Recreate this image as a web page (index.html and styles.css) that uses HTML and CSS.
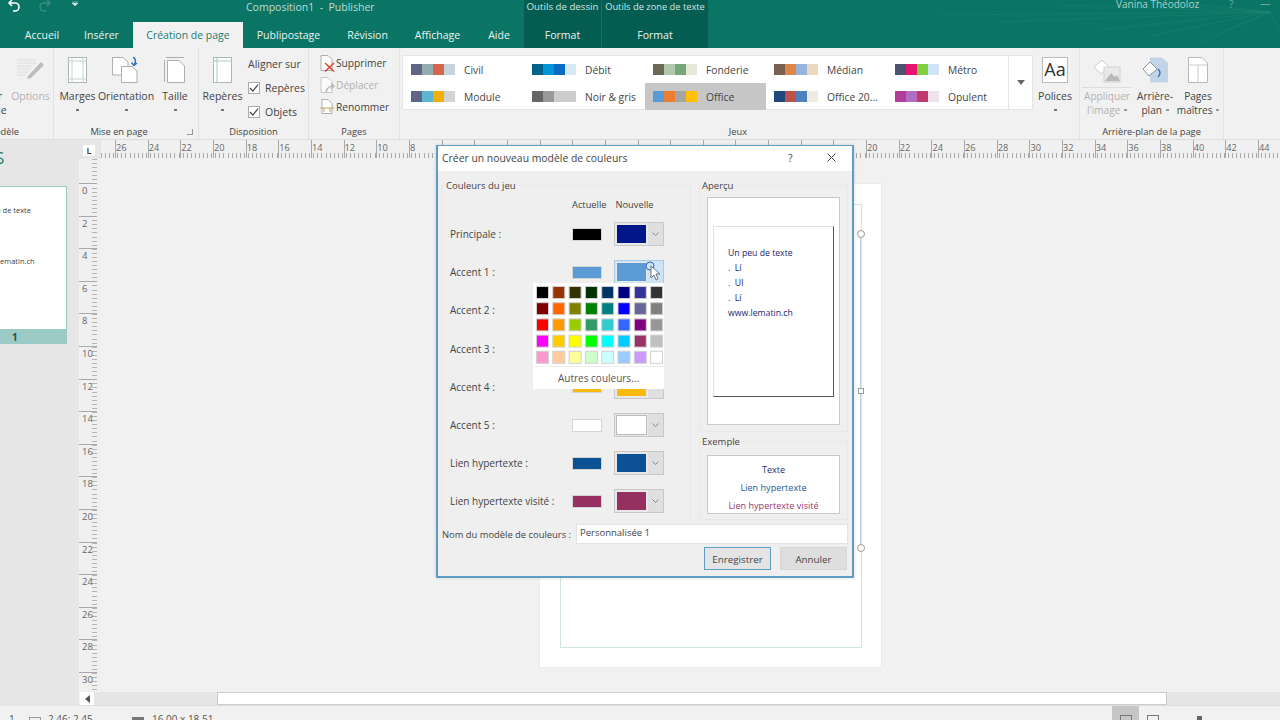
FILE: index.html
```html
<!DOCTYPE html>
<html lang="fr">
<head>
<meta charset="utf-8">
<title>Composition1 - Publisher</title>
<link rel="stylesheet" href="styles.css">
</head>
<body>
<div class="app">
  <header class="head">
    <svg class="texture" width="400" height="48" viewBox="0 0 400 48">
      <g stroke="#2a8a78" stroke-width="1" fill="none" opacity=".3">
        <path d="M390 12 L60 15M390 12 L120 22M390 12 L180 5M390 12 L220 30M390 12 L270 36M390 12 L320 42M390 12 L240 0M390 12 L340 33M390 12 L300 2M390 12 L400 30"/>
      </g>
    </svg>
    <div class="title-row">
      <div class="qat">
        <svg class="undo" width="14" height="14" viewBox="0 0 14 14"><path d="M5 1 L2 4 L5 7M2 4 H8 a4 4 0 0 1 0 8 H6" fill="none" stroke="#fff" stroke-width="1.6"/></svg>
        <svg class="redo" width="14" height="14" viewBox="0 0 14 14"><path d="M9 1 L12 4 L9 7M12 4 H6 a4 4 0 0 0 0 8 H8" fill="none" stroke="#3b8f80" stroke-width="1.6"/></svg>
        <svg class="qat-more" width="6" height="6" viewBox="0 0 6 6"><path d="M0 0H6M0 2H6L3 5Z" fill="#d5e8e4" stroke="#d5e8e4" stroke-width=".6"/></svg>
      </div>
      <div class="doc-title">Composition1&nbsp; - &nbsp;Publisher</div>
      <div class="ctx ctx-a">Outils de dessin</div>
      <div class="ctx ctx-b">Outils de zone de texte</div>
      <div class="user">Vanina Théodoloz</div>
      <div class="help">?</div>
      <div class="minim">—</div>
    </div>
    <nav class="tabs">
      <div class="tab w56">Accueil</div>
      <div class="tab w63">Insérer</div>
      <div class="tab w110 active">Création de page</div>
      <div class="tab w91">Publipostage</div>
      <div class="tab w67">Révision</div>
      <div class="tab w73">Affichage</div>
      <div class="tab w50">Aide</div>
      <div class="tab w77 dark">Format</div>
      <div class="tab w106 dark gap1">Format</div>
    </nav>
  </header>

  <section class="ribbon">
    <div class="group g0">
      <div class="g-body end">
        <div class="cut-col">r<br>le</div>
        <div class="rbtn w42 off">
          <svg class="ric" width="30" height="26" viewBox="0 0 30 26"><path d="M1 3H20M1 6H20M1 9H16M1 12H14M1 15H12M1 18H10" stroke="#dcdcdc"/><path d="M12 19 L25 5 L28 8 L15 21 L11 22Z" fill="#bdbdbd"/></svg>
          <span>Options</span>
        </div>
      </div>
      <div class="g-label end-label">Modèle</div>
    </div>

    <div class="group g1">
      <div class="g-body">
        <div class="rbtn w46">
          <svg class="ric" width="20" height="26" viewBox="0 0 20 26"><rect x=".5" y=".5" width="18" height="25" fill="#fff" stroke="#a9b8b6"/><path d="M4 .5V25.500M15 .5V25.500M.5 4H18.500M.5 22H18.500" stroke="#c5d3d1" fill="none"/></svg>
          <span>Marges</span><i class="caret"></i>
        </div>
        <div class="rbtn w52">
          <svg class="ric" width="28" height="26" viewBox="0 0 28 26"><path d="M.5 .5H11L16 5V18H.5Z" fill="#fff" stroke="#a9b0ae"/><path d="M9.500 9.500H20L25 14V25.500H9.500Z" fill="#fff" stroke="#a9b0ae"/><path d="M21 0C24 2 24 5 22 8M19.500 5.500L22 8.500L25 6" fill="none" stroke="#2f72b5" stroke-width="1.4"/></svg>
          <span>Orientation</span><i class="caret"></i>
        </div>
        <div class="rbtn w46">
          <svg class="ric" width="22" height="26" viewBox="0 0 22 26"><path d="M.5 3V25" stroke="#a9b0ae"/><path d="M2 .5H20" stroke="#a9b0ae"/><path d="M3.500 3.500H15L20.500 9V25.500H3.500Z" fill="#fff" stroke="#a9b0ae"/></svg>
          <span>Taille</span><i class="caret"></i>
        </div>
      </div>
      <div class="g-label launcher">Mise en page<i class="launch"></i></div>
    </div>

    <div class="group g2">
      <div class="g-body">
        <div class="rbtn w46">
          <svg class="ric" width="20" height="26" viewBox="0 0 20 26"><rect x=".5" y=".5" width="18" height="25" fill="#fff" stroke="#a9b8b6"/><path d="M4 .5V25.500M.5 4H18.500" stroke="#a5cbc5" fill="none"/></svg>
          <span>Repères</span><i class="caret"></i>
        </div>
        <div class="opts">
          <div class="opt-head">Aligner sur</div>
          <div class="chk"><b><svg width="10" height="10" viewBox="0 0 10 10"><path d="M1 5L4 8L9 1.500" fill="none" stroke="#444" stroke-width="1.200"/></svg></b>Repères</div>
          <div class="chk"><b><svg width="10" height="10" viewBox="0 0 10 10"><path d="M1 5L4 8L9 1.500" fill="none" stroke="#444" stroke-width="1.200"/></svg></b>Objets</div>
        </div>
      </div>
      <div class="g-label">Disposition</div>
    </div>

    <div class="group g3">
      <div class="g-body pages">
        <div class="pg"><svg width="17" height="17" viewBox="0 0 17 17"><path d="M2 .5H9L13 4.500V15.500H2Z" fill="#fff" stroke="#a9b0ae"/><path d="M6 8L15 16.500M15 8L6 16.500" stroke="#d9472b" stroke-width="1.500"/></svg>Supprimer</div>
        <div class="pg off"><svg width="17" height="17" viewBox="0 0 17 17"><path d="M2 .5H9L13 4.500V15.500H2Z" fill="#fafafa" stroke="#c4c9c8"/><path d="M7 15C8 10 11 9 15 9M12 6.500L15 9L12 12" fill="none" stroke="#b5b5b5" stroke-width="1.400"/></svg>Déplacer</div>
        <div class="pg"><svg width="17" height="17" viewBox="0 0 17 17"><path d="M3 .5H9L13 4.500V14.500H3Z" fill="#fff" stroke="#a9b0ae"/><path d="M1 9H15M5 9V13M11 9V13" stroke="#c7a860"/></svg>Renommer</div>
      </div>
      <div class="g-label">Pages</div>
    </div>

    <div class="group g4">
      <div class="g-body">
        <div class="gallery">
          <div class="gal-grid">
            <div class="gal"><svg class="sw" width="44" height="11"><rect width="11" height="11" fill="#5f6587"/><rect x="11" width="11" height="11" fill="#93adb2"/><rect x="22" width="11" height="11" fill="#d5654c"/><rect x="33" width="11" height="11" fill="#c6d3dc"/></svg>Civil</div>
            <div class="gal"><svg class="sw" width="44" height="11"><rect width="11" height="11" fill="#01638c"/><rect x="11" width="11" height="11" fill="#0495d8"/><rect x="22" width="11" height="11" fill="#0a6bc4"/><rect x="33" width="11" height="11" fill="#d3eaf5"/></svg>Débit</div>
            <div class="gal"><svg class="sw" width="44" height="11"><rect width="11" height="11" fill="#6a6a57"/><rect x="11" width="11" height="11" fill="#b0c9ad"/><rect x="22" width="11" height="11" fill="#76a67a"/><rect x="33" width="11" height="11" fill="#e6e8da"/></svg>Fonderie</div>
            <div class="gal"><svg class="sw" width="44" height="11"><rect width="11" height="11" fill="#7b5f50"/><rect x="11" width="11" height="11" fill="#de8548"/><rect x="22" width="11" height="11" fill="#96b5dc"/><rect x="33" width="11" height="11" fill="#ead9c0"/></svg>Médian</div>
            <div class="gal"><svg class="sw" width="44" height="11"><rect width="11" height="11" fill="#4d5270"/><rect x="11" width="11" height="11" fill="#e8126f"/><rect x="22" width="11" height="11" fill="#7fcf3f"/><rect x="33" width="11" height="11" fill="#cfe4f7"/></svg>Métro</div>
            <div class="gal"><svg class="sw" width="44" height="11"><rect width="11" height="11" fill="#5f6587"/><rect x="11" width="11" height="11" fill="#5cb5d3"/><rect x="22" width="11" height="11" fill="#f2af00"/><rect x="33" width="11" height="11" fill="#d4d4d4"/></svg>Module</div>
            <div class="gal"><svg class="sw" width="44" height="11"><rect width="11" height="11" fill="#666"/><rect x="11" width="11" height="11" fill="#999"/><rect x="22" width="22" height="11" fill="#ccc"/></svg>Noir &amp; gris</div>
            <div class="gal sel"><svg class="sw" width="44" height="11"><rect width="11" height="11" fill="#5b9bd5"/><rect x="11" width="11" height="11" fill="#ed7d31"/><rect x="22" width="11" height="11" fill="#a5a5a5"/><rect x="33" width="11" height="11" fill="#ffc000"/></svg>Office</div>
            <div class="gal"><svg class="sw" width="44" height="11"><rect width="11" height="11" fill="#1f497d"/><rect x="11" width="11" height="11" fill="#c0504d"/><rect x="22" width="11" height="11" fill="#4f81bd"/><rect x="33" width="11" height="11" fill="#eeece1"/></svg>Office 20...</div>
            <div class="gal"><svg class="sw" width="44" height="11"><rect width="11" height="11" fill="#b13f9a"/><rect x="11" width="11" height="11" fill="#b06ec3"/><rect x="22" width="11" height="11" fill="#c23a6c"/><rect x="33" width="11" height="11" fill="#f0e2ea"/></svg>Opulent</div>
          </div>
          <div class="gal-more"><svg width="8" height="5" viewBox="0 0 8 5"><path d="M0 0H8L4 5Z" fill="#666"/></svg></div>
        </div>
        <div class="rbtn w46 polices">
          <div class="aa">Aa</div>
          <span>Polices</span><i class="caret"></i>
        </div>
      </div>
      <div class="g-label jeux">Jeux</div>
    </div>

    <div class="group g5">
      <div class="g-body">
        <div class="rbtn w50 off sep-top">
          <svg class="ric" width="28" height="26" viewBox="0 0 28 26"><path d="M9 3L16 10L8 17L1 10Z" fill="#fff" stroke="#ccc"/><rect x="11" y="10" width="16" height="15" fill="#e8e8e8" stroke="#d2d2d2"/><path d="M12 24L18 16L22 20L24 18L27 24Z" fill="#b9b9b9"/></svg>
          <span>Appliquer<br>l'image <i class="tiny"></i></span>
        </div>
        <div class="rbtn w46">
          <svg class="ric" width="27" height="26" viewBox="0 0 27 26"><path d="M8 .5H20L26 6V25.500H8Z" fill="#c3d4e8"/><path d="M8 5L15 12L7 19L1 12Z" fill="#fff" stroke="#8d9492"/><path d="M16 12C19 15 18 18 16 20" fill="none" stroke="#2f72b5" stroke-width="1.300"/></svg>
          <span>Arrière-<br>plan <i class="tiny"></i></span>
        </div>
        <div class="rbtn w44 third">
          <svg class="ric" width="20" height="26" viewBox="0 0 20 26"><path d="M.5 .5H14L19.500 6V25.500H.5Z" fill="#fff" stroke="#b5bbba"/><path d="M.5 8H19.500M10 8V25.500" stroke="#c9cecd"/></svg>
          <span>Pages<br>maîtres <i class="tiny"></i></span>
        </div>
      </div>
      <div class="g-label">Arrière-plan de la page</div>
    </div>
  </section>

  <main class="work">
    <aside class="pane">
      <div class="pane-title">S</div>
      <div class="thumb">
        <div class="thumb-sheet">
          <p class="tl1">u de texte</p>
          <p class="tl2">ematin.ch</p>
        </div>
        <div class="thumb-num">1</div>
      </div>
    </aside>
    <div class="stage">
      <div class="hruler-row">
        <div class="corner"><span>L</span></div>
        <div class="hruler">
          <span>26</span><span>24</span><span>22</span><span>20</span><span>18</span><span>16</span><span>14</span><span>12</span><span>10</span><span>8</span><span></span><span></span><span></span><span></span><span></span><span></span><span></span><span></span><span></span><span></span><span></span><span></span><span></span><span>20</span><span>22</span><span>24</span><span>26</span><span>28</span><span>30</span><span>32</span><span>34</span><span>36</span><span>38</span><span>40</span><span>42</span><span>44</span>
        </div>
      </div>
      <div class="mid">
        <div class="vruler">
          <span>0</span><span>2</span><span>4</span><span>6</span><span>8</span><span>10</span><span>12</span><span>14</span><span>16</span><span>18</span><span>20</span><span>22</span><span>24</span><span>26</span><span>28</span><span>30</span>
        </div>
        <div class="canvas">
          <div class="page">
            <div class="guides"></div>
            <div class="sel-line"></div>
            <i class="handle h1"></i>
            <i class="handle h2"></i>
            <i class="handle h3"></i>
          </div>
        </div>
      </div>
      <div class="hscroll">
        <div class="sc-btn"><svg width="5" height="8" viewBox="0 0 5 8"><path d="M5 0V8L0 4Z" fill="#555"/></svg></div>
        <div class="sc-track a"></div>
        <div class="sc-thumb"></div>
        <div class="sc-track b"></div>
      </div>
    </div>
  </main>

  <footer class="status">
    <span class="st-1">1</span>
    <i class="st-box"></i>
    <span class="st-2">2,46; 2,45</span>
    <i class="st-ico"></i>
    <span class="st-3">16,00 x 18,51</span>
    <div class="st-right">
      <div class="view on"><i></i></div>
      <div class="view"><i></i></div>
      <div class="zoomer"><i></i></div>
    </div>
  </footer>

  <div class="dialog">
    <div class="dlg-title">
      <span class="dlg-name">Créer un nouveau modèle de couleurs</span>
      <span class="dlg-help">?</span>
      <svg class="dlg-x" width="9" height="9" viewBox="0 0 9 9"><path d="M.5 .5L8.500 8.500M8.500 .5L.5 8.500" stroke="#444" stroke-width="1"/></svg>
    </div>
    <div class="dlg-body">
      <div class="dlg-main">
        <div class="fs left">
          <div class="legend">Couleurs du jeu</div>
          <div class="col-heads"><span>Actuelle</span><span>Nouvelle</span></div>
          <div class="row"><label>Principale :</label><i class="cur k"></i><div class="pick"><i class="k2"></i><b><svg width="7" height="4" viewBox="0 0 7 4"><path d="M.5 .5L3.500 3.500L6.500 .5" fill="none" stroke="#888"/></svg></b></div></div>
          <div class="row"><label>Accent 1 :</label><i class="cur a1"></i><div class="pick open"><i class="a1"></i><b></b></div></div>
          <div class="row"><label>Accent 2 :</label></div>
          <div class="row"><label>Accent 3 :</label></div>
          <div class="row"><label>Accent 4 :</label><i class="cur a4"></i><div class="pick"><i class="a4"></i><b></b></div></div>
          <div class="row"><label>Accent 5 :</label><i class="cur wh"></i><div class="pick"><i class="wh"></i><b><svg width="7" height="4" viewBox="0 0 7 4"><path d="M.5 .5L3.500 3.500L6.500 .5" fill="none" stroke="#888"/></svg></b></div></div>
          <div class="row"><label>Lien hypertexte :</label><i class="cur li"></i><div class="pick"><i class="li"></i><b><svg width="7" height="4" viewBox="0 0 7 4"><path d="M.5 .5L3.500 3.500L6.500 .5" fill="none" stroke="#888"/></svg></b></div></div>
          <div class="row"><label>Lien hypertexte visité :</label><i class="cur vi"></i><div class="pick"><i class="vi"></i><b><svg width="7" height="4" viewBox="0 0 7 4"><path d="M.5 .5L3.500 3.500L6.500 .5" fill="none" stroke="#888"/></svg></b></div></div>
        </div>
        <div class="right">
          <div class="fs apercu">
            <div class="legend">Aperçu</div>
            <div class="frame">
              <div class="mini">
                <p>Un peu de texte</p>
                <p class="bul">.&nbsp; Lí</p>
                <p class="bul">.&nbsp; Ul</p>
                <p class="bul">.&nbsp; Lí</p>
                <p>www.lematin.ch</p>
              </div>
            </div>
          </div>
          <div class="fs exemple">
            <div class="legend">Exemple</div>
            <div class="sample">
              <p class="s-t">Texte</p>
              <p class="s-l">Lien hypertexte</p>
              <p class="s-v">Lien hypertexte visité</p>
            </div>
          </div>
        </div>
      </div>
      <div class="name-row">
        <label>Nom du modèle de couleurs :</label>
        <div class="input">Personnalisée 1</div>
      </div>
      <div class="btns">
        <div class="btn pri">Enregistrer</div>
        <div class="btn">Annuler</div>
      </div>
    </div>

    <div class="popup">
      <svg class="pal" width="131" height="82" viewBox="0 0 131 82">
        <g stroke="#d0d0d0" stroke-width="1">
          <rect x="3.500" y="3.500" width="12" height="12" fill="#000000"/><rect x="19.800" y="3.500" width="12" height="12" fill="#993300"/><rect x="36.100" y="3.500" width="12" height="12" fill="#333300"/><rect x="52.400" y="3.500" width="12" height="12" fill="#003300"/><rect x="68.700" y="3.500" width="12" height="12" fill="#003366"/><rect x="85" y="3.500" width="12" height="12" fill="#000080"/><rect x="101.300" y="3.500" width="12" height="12" fill="#333399"/><rect x="117.600" y="3.500" width="12" height="12" fill="#333333"/>
          <rect x="3.500" y="19.700" width="12" height="12" fill="#800000"/><rect x="19.800" y="19.700" width="12" height="12" fill="#ff6600"/><rect x="36.100" y="19.700" width="12" height="12" fill="#808000"/><rect x="52.400" y="19.700" width="12" height="12" fill="#008000"/><rect x="68.700" y="19.700" width="12" height="12" fill="#008080"/><rect x="85" y="19.700" width="12" height="12" fill="#0000ff"/><rect x="101.300" y="19.700" width="12" height="12" fill="#666699"/><rect x="117.600" y="19.700" width="12" height="12" fill="#808080"/>
          <rect x="3.500" y="35.900" width="12" height="12" fill="#ff0000"/><rect x="19.800" y="35.900" width="12" height="12" fill="#ff9900"/><rect x="36.100" y="35.900" width="12" height="12" fill="#99cc00"/><rect x="52.400" y="35.900" width="12" height="12" fill="#339966"/><rect x="68.700" y="35.900" width="12" height="12" fill="#33cccc"/><rect x="85" y="35.900" width="12" height="12" fill="#3366ff"/><rect x="101.300" y="35.900" width="12" height="12" fill="#800080"/><rect x="117.600" y="35.900" width="12" height="12" fill="#969696"/>
          <rect x="3.500" y="52.100" width="12" height="12" fill="#ff00ff"/><rect x="19.800" y="52.100" width="12" height="12" fill="#ffcc00"/><rect x="36.100" y="52.100" width="12" height="12" fill="#ffff00"/><rect x="52.400" y="52.100" width="12" height="12" fill="#00ff00"/><rect x="68.700" y="52.100" width="12" height="12" fill="#00ffff"/><rect x="85" y="52.100" width="12" height="12" fill="#00ccff"/><rect x="101.300" y="52.100" width="12" height="12" fill="#993366"/><rect x="117.600" y="52.100" width="12" height="12" fill="#c0c0c0"/>
          <rect x="3.500" y="68.300" width="12" height="12" fill="#ff99cc"/><rect x="19.800" y="68.300" width="12" height="12" fill="#ffcc99"/><rect x="36.100" y="68.300" width="12" height="12" fill="#ffff99"/><rect x="52.400" y="68.300" width="12" height="12" fill="#ccffcc"/><rect x="68.700" y="68.300" width="12" height="12" fill="#ccffff"/><rect x="85" y="68.300" width="12" height="12" fill="#99ccff"/><rect x="101.300" y="68.300" width="12" height="12" fill="#cc99ff"/><rect x="117.600" y="68.300" width="12" height="12" fill="#ffffff"/>
        </g>
      </svg>
      <div class="more-colors">Autres couleurs...</div>
    </div>
    <svg class="cursor" width="14" height="20" viewBox="0 0 14 20"><circle cx="4" cy="5" r="4" fill="none" stroke="#2f62c4" stroke-width="1"/><path d="M5 5V17L8 14L10 19L12 18L10 13H14Z" fill="#fff" stroke="#555" stroke-width=".8"/></svg>
  </div>
</div>
</body>
</html>
```
FILE: styles.css
```css
* { box-sizing: border-box; }
html, body { margin: 0; padding: 0; }
body { width: 1280px; height: 720px; overflow: hidden; font-family: "Open Sans", "Noto Sans", sans-serif; font-size: 10.5px; color: #444; background: #f1f1f1; }
p { margin: 0; }
i { display: block; font-style: normal; }
.app { position: relative; width: 1280px; height: 720px; display: flex; flex-direction: column; overflow: hidden; }

/* header */
.head { position: relative; height: 48px; background: #0a7565; color: #e4f1ee; flex: none; }
.texture { position: absolute; right: 0; top: 0; }
.title-row { position: relative; display: flex; height: 22px; }
.qat { width: 246px; display: flex; align-items: flex-start; position: relative; padding-left: 7px; }
.undo { margin-top: -1px; }
.redo { margin: -1px 0 0 17px; }
.qat-more { margin: 1px 0 0 20px; }
.doc-title { width: 278px; line-height: 14px; color: #bfdcd6; font-size: 10.5px; }
.ctx { background: #055c51; height: 22px; text-align: center; line-height: 14px; color: #d2e6e2; font-size: 9.700px; white-space: nowrap; }
.ctx-a { width: 77px; }
.ctx-b { width: 106px; margin-left: 1px; font-size: 9.300px; }
.user { margin-left: 408px; width: 113px; line-height: 9px; color: #a9d0c9; font-size: 10px; white-space: nowrap; }
.help { width: 31px; line-height: 8px; color: #6aa79c; }
.minim { line-height: 6px; color: #6aa79c; }
.tabs { position: relative; display: flex; height: 26px; padding-left: 14px; }
.tab { text-align: center; line-height: 26px; color: #e9f4f2; font-size: 10.5px; }
.tab.active { background: #f1f1f1; color: #23796c; }
.tab.dark { background: #055c51; }
.tab.gap1 { margin-left: 1px; }
.w56 { width: 56px; } .w63 { width: 63px; } .w110 { width: 110px; } .w91 { width: 91px; } .w67 { width: 67px; } .w73 { width: 73px; } .w50 { width: 50px; } .w77 { width: 77px; } .w106 { width: 106px; }

/* ribbon */
.ribbon { display: flex; height: 92px; background: #f1f1f1; flex: none; border-bottom: 1px solid #dcdcdc; }
.group { display: flex; flex-direction: column; border-right: 1px solid #e2e2e2; flex: none; }
.g0 { width: 54px; overflow: hidden; }
.g1 { width: 145px; }
.g2 { width: 110px; }
.g3 { width: 91px; }
.g4 { width: 680px; }
.g5 { width: 144px; }
.g-body { flex: 1; display: flex; padding-top: 7px; min-height: 0; }
.g-label { height: 14px; line-height: 14px; text-align: center; font-size: 9.300px; white-space: nowrap; position: relative; flex: none; }
.end-label { text-align: right; padding-right: 34px; direction: rtl; }
.launcher { padding-right: 14px; }
.launch { position: absolute; right: 5px; top: 4px; width: 6px; height: 6px; border-right: 1px solid #999; border-bottom: 1px solid #999; }
.cut-col { width: 11px; margin-left: -2px; padding-top: 34px; line-height: 14px; font-size: 10.5px; flex: none; }
.rbtn { display: flex; flex-direction: column; align-items: center; font-size: 10.5px; line-height: 14px; text-align: center; flex: none; white-space: nowrap; }
.rbtn .ric { height: 26px; margin: 2px 0 6px; flex: none; }
.rbtn.off, .pg.off { color: #b1b1b1; }
.g0 .rbtn { margin-left: -1px; width: 45px; }
.w42 { width: 42px; } .w46 { width: 46px; } .w52 { width: 52px; } .w50 { width: 50px; } .w44 { width: 44px; }
.g1 .rbtn:nth-child(1) { width: 47px; }
.g1 .rbtn:nth-child(2) { width: 50px; }
.g1 .rbtn:nth-child(3) { width: 48px; }
.caret { width: 3px; height: 2px; margin-top: 6px; background: #777; }
.tiny { display: inline-block; width: 3px; height: 2px; background: #999; vertical-align: 3px; margin-left: 1px; }
.g2 .rbtn { width: 47px; }
.opts { padding-left: 2px; }
.opt-head { height: 21px; line-height: 18px; }
.chk { display: flex; align-items: center; height: 24px; }
.chk b { width: 12px; height: 12px; background: #fff; border: 1px solid #aaa; margin-right: 5px; display: flex; align-items: center; justify-content: center; }
.g-body.pages { flex-direction: column; padding: 4px 0 0 10px; font-size: 10.2px; }
.pg { display: flex; align-items: center; height: 22px; line-height: 14px; white-space: nowrap; flex: none; }
.gallery { display: flex; width: 631px; height: 55px; margin-left: 2px; background: #fff; border: 1px solid #e4e4e4; flex: none; }
.gal-grid { display: grid; width: 605px; grid-template-columns: repeat(5, 121px); grid-template-rows: 27px 27px; }
.gal { display: flex; align-items: center; padding-left: 8px; gap: 9px; font-size: 10.3px; white-space: nowrap; }
.gal.sel { background: #c6c6c6; }
.sw { flex: none; }
.gal-more { flex: 1; border-left: 1px solid #e4e4e4; display: flex; align-items: center; justify-content: center; }
.polices { width: 44px; }
.aa { width: 26px; height: 26px; margin: 2px 0 6px; border: 1px solid #bbb; background: #fff; font-size: 18px; line-height: 23px; color: #333; }
.jeux { width: 676px; }
.g5 .g-body { padding-left: 2px; }
.g5 .rbtn { font-size: 10.1px; }
.sep-top .ric { margin-bottom: 4px; }
.sep-top span { border-top: 1px solid #dedede; padding-top: 1px; width: 50px; }
.third { margin-left: -2px; }

/* workspace */
.work { flex: 1; display: flex; min-height: 0; }
.pane { width: 79px; background: #e6e6e6; flex: none; }
.pane-title { height: 38px; padding-top: 7px; margin-left: -5px; font-size: 17px; line-height: 22px; color: #1f7d70; overflow: hidden; }
.thumb { width: 67px; margin-top: 8px; }
.thumb-sheet { height: 144px; background: #fff; border: 1px solid #9ccbc5; border-left: 0; position: relative; font-size: 7.5px; color: #444; padding-top: 18px; line-height: 10px; white-space: nowrap; }
.tl1 { height: 51px; margin-left: -4px; }
.thumb-num { height: 14px; background: #9ccbc5; font-size: 10px; line-height: 14px; font-weight: 700; padding-left: 12px; color: #2c4e49; }
.stage { flex: 1; min-width: 0; display: flex; flex-direction: column; }
.hruler-row { height: 19px; display: flex; flex: none; background: #efefef; }
.corner { width: 22px; background: #e6e6e6; padding: 5px 0 0 4px; flex: none; }
.corner span { display: block; width: 12px; height: 11px; background: #fff; font-size: 9px; line-height: 11px; text-align: center; color: #333; font-weight: 600; }
.hruler { flex: 1; display: flex; padding-left: 14px; overflow: hidden; background-color: #f0f0f0; background-image: repeating-linear-gradient(90deg, #a9a9a9 0, #a9a9a9 1px, transparent 1px, transparent 4.083px); background-size: 100% 5px; background-position: 0 13px; background-repeat: no-repeat; }
.hruler span { width: 32.660px; flex: none; height: 18px; border-left: 1px solid #a9a9a9; padding: 2px 0 0 0; font-size: 9.200px; line-height: 12px; color: #666; }
.mid { flex: 1; display: flex; min-height: 0; }
.vruler { width: 22px; flex: none; padding-top: 24px; overflow: hidden; background-color: #f0f0f0; background-image: repeating-linear-gradient(180deg, #b4b4b4 0, #b4b4b4 1px, transparent 1px, transparent 4.08px); background-size: 5px 100%; background-position: 13px 0; background-repeat: no-repeat; }
.vruler span { display: block; width: 18px; height: 32.6px; border-top: 1px solid #a9a9a9; padding-left: 3px; font-size: 9.500px; line-height: 13px; color: #666; }
.canvas { flex: 1; position: relative; background: #f1f1f1; overflow: hidden; }
.page { position: absolute; left: 438px; top: 24px; width: 343px; height: 485px; background: #fff; border: 1px solid #eaeaea; }
.guides { position: absolute; left: 20px; top: 20px; width: 302px; height: 444px; border: 1px solid #cfe5e2; }
.sel-line { position: absolute; left: 320px; top: 50px; height: 314px; width: 1px; background: #b9d3df; }
.handle { position: absolute; width: 8px; height: 8px; background: #fff; border: 1px solid #999; }
.h1 { left: 317px; top: 46px; border-radius: 50%; }
.h2 { left: 318px; top: 204px; width: 6px; height: 6px; }
.h3 { left: 317px; top: 360px; border-radius: 50%; }
.hscroll { height: 14px; display: flex; flex: none; border-bottom: 1px solid #ddd; }
.sc-btn { width: 14px; background: #fff; display: flex; align-items: center; justify-content: center; margin-left: 1px; }
.sc-track { background: #e5e5e5; }
.sc-track.a { width: 123px; }
.sc-track.b { flex: 1; }
.sc-thumb { width: 950px; background: #fff; border: 1px solid #ccc; }

/* status */
.status { height: 14px; display: flex; flex: none; align-items: flex-start; background: #f1f1f1; font-size: 10px; line-height: 26px; color: #555; overflow: hidden; white-space: nowrap; }
.st-1 { margin-left: 9px; width: 20px; }
.st-box { width: 12px; height: 14px; margin-top: 11px; border: 1px solid #999; }
.st-2 { margin-left: 7px; width: 84px; }
.st-ico { width: 12px; height: 14px; margin-top: 11px; background: #777; }
.st-3 { margin-left: 8px; }
.st-right { margin-left: auto; display: flex; height: 14px; width: 168px; }
.view { width: 27px; display: flex; justify-content: center; padding-top: 9px; }
.view.on { background: #c6c6c6; }
.view i { width: 12px; height: 10px; border: 1px solid #777; }
.zoomer { width: 60px; padding: 10px 0 0 31px; }
.zoomer i { width: 5px; height: 6px; background: #666; }

/* dialog */
.dialog { position: absolute; left: 436px; top: 145px; width: 418px; height: 433px; background: #efefef; border: 2px solid #5f9dc4; border-top-width: 1px; display: flex; flex-direction: column; box-shadow: 0 0 3px rgba(0,0,0,.15); }
.dlg-title { height: 25px; background: #fff; display: flex; align-items: center; flex: none; padding: 0 0 2px 4px; position: relative; }
.dlg-name { font-size: 10.4px; flex: none; width: 346px; color: #444; }
.dlg-help { width: 39px; font-size: 10.5px; flex: none; }
.dlg-body { flex: 1; display: flex; flex-direction: column; padding: 8px 4px 0 3px; min-height: 0; }
.dlg-main { display: flex; height: 346px; flex: none; }
.fs { border: 1px solid #e8e8e8; position: relative; }
.legend { position: absolute; top: -7px; left: 3px; background: #efefef; padding: 0 1px; line-height: 13px; font-size: 9.500px; white-space: nowrap; }
.right .legend { left: 1px; }
.left { width: 250px; height: 340px; margin-top: 6px; padding: 13px 0 0 8px; font-size: 10px; border-bottom: 0; }
.col-heads { display: flex; height: 12px; padding-left: 122px; line-height: 12px; gap: 9px; margin-bottom: 4px; font-size: 9.300px; }
.col-heads span { flex: none; }
.row { display: flex; align-items: center; height: 38.200px; }
.row label { width: 122px; flex: none; line-height: 14px; }
.cur { width: 30px; height: 13px; flex: none; margin-right: 12px; border: 1px solid #d5d5d5; }
.pick { width: 50px; height: 24px; border: 1px solid #c8c8c8; flex: none; display: flex; padding: 1px; background: #e9e9e9; }
.pick i { width: 31px; height: 20px; border: 1px solid #e8e8e8; }
.pick b { flex: 1; display: flex; align-items: center; justify-content: center; background: #dfdfdf; margin: -1px -1px -1px 1px; }
.k { background: #000; } .k2 { background: #001689; }
.a1 { background: #5b9bd5; } .a4 { background: #fbb90f; } .wh { background: #fff; } .li { background: #0b5196; } .vi { background: #963060; }
.pick .wh { border-color: #bbb; }
.pick.open { background: #cfe4f7; border-color: #a9c9e6; }
.pick.open b { background: #cde3f6; }
.right { margin-left: 8px; width: 149px; display: flex; flex-direction: column; margin-top: 6px; }
.apercu { height: 247px; padding: 11px 0 0 7px; }
.frame { width: 133px; height: 228px; background: #fff; border: 1px solid #c8c8c8; padding: 28px 5px 0 5px; }
.mini { width: 121px; height: 171px; background: #fff; border: 1px solid #e0e0e0; border-right-color: #555; border-bottom-color: #555; padding: 19px 0 0 14px; color: #24246e; font-size: 8.700px; line-height: 15px; white-space: nowrap; }
.exemple { height: 79px; margin-top: 9px; padding: 13px 0 0 7px; }
.sample { width: 133px; height: 59px; background: #fff; border: 1px solid #c8c8c8; text-align: center; font-size: 9.100px; line-height: 18px; padding-top: 5px; white-space: nowrap; }
.s-t { color: #1f2a78; } .s-l { color: #245a94; } .s-v { color: #96386a; }
.name-row { display: flex; height: 20px; margin-top: -1px; align-items: center; flex: none; }
.name-row label { width: 135px; padding-left: 1px; font-size: 9.400px; flex: none; white-space: nowrap; }
.input { width: 272px; height: 20px; background: #fff; border: 1px solid #e4e4e4; line-height: 14px; padding: 1px 0 0 3px; font-size: 9.500px; }
.btns { display: flex; justify-content: flex-end; gap: 9px; margin-top: 3px; padding-right: 1px; flex: none; }
.btn { width: 67px; height: 23px; background: #dedede; line-height: 23px; text-align: center; font-size: 9.800px; border: 1px solid #d6d6d6; }
.btn.pri { background: #e4e4e4; border: 1px solid #5f9dc4; }
.popup { position: absolute; left: 95px; top: 137px; width: 131px; height: 106px; background: #fff; }
.pal { display: block; }
.more-colors { height: 23px; margin-top: 1px; border-top: 1px solid #eee; text-align: center; line-height: 23px; font-size: 10px; color: #555; }
.cursor { position: absolute; left: 208px; top: 115px; }
.dlg-x { flex: none; }
```
